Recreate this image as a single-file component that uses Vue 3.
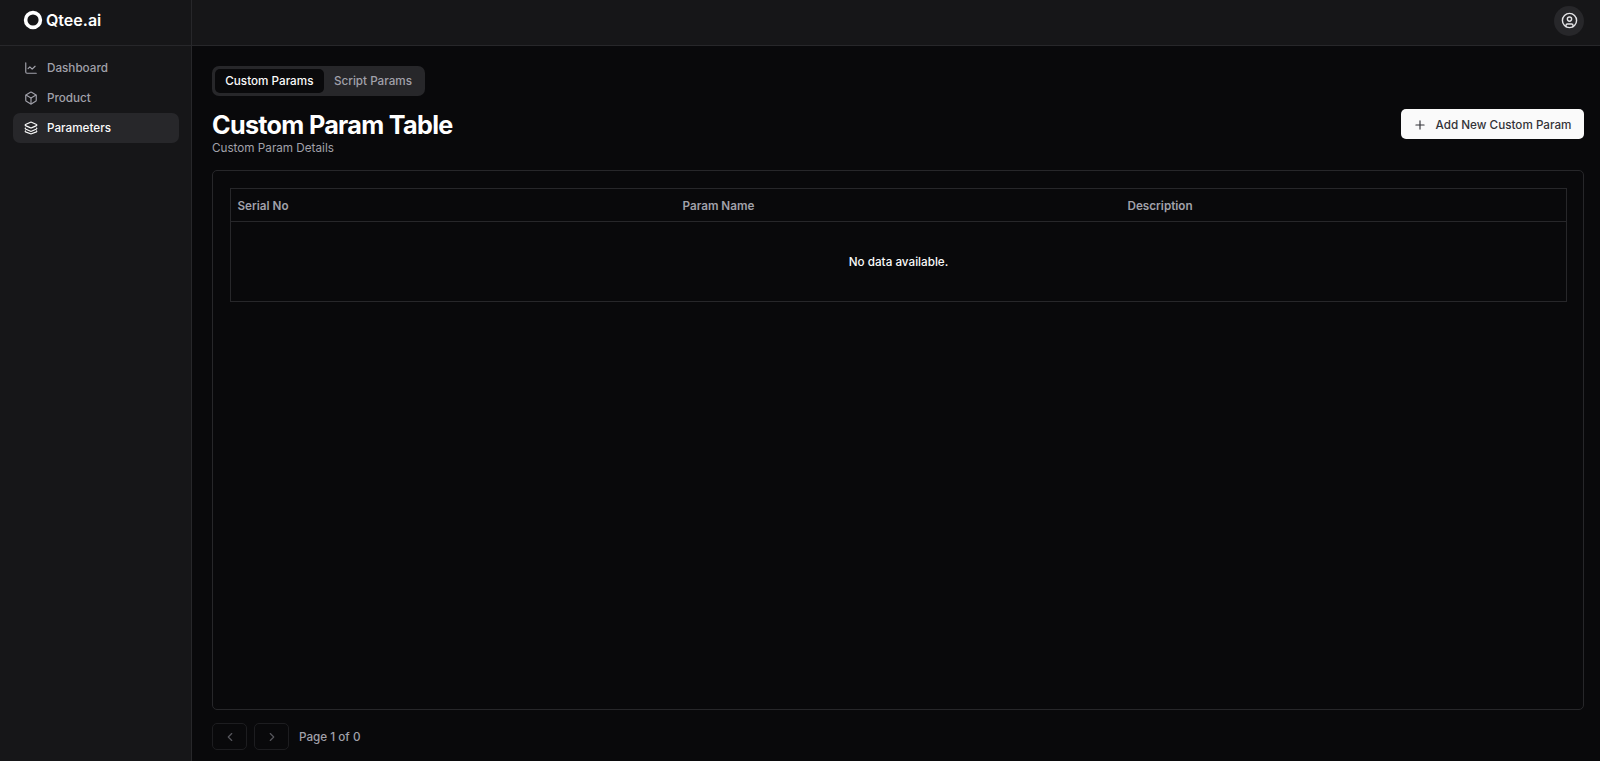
<script setup>
const nav = [
  { label: 'Dashboard', icon: 'chart' },
  { label: 'Product', icon: 'box' },
  { label: 'Parameters', icon: 'layers', active: true },
]
const columns = ['Serial No', 'Param Name', 'Description']
</script>

<template>
  <div class="app">
    <aside class="sidebar">
      <div class="brand">
        <svg class="logo" viewBox="0 0 20 20" width="20" height="20"><circle cx="10" cy="10" r="7.4" fill="none" stroke="#fff" stroke-width="3.6" /></svg>
        <span>Qtee.ai</span>
      </div>
      <nav class="nav">
        <a v-for="item in nav" :key="item.label" class="nav-item" :class="{ active: item.active }">
          <svg viewBox="0 0 24 24" width="14" height="14" fill="none" stroke="currentColor" stroke-width="2" stroke-linecap="round" stroke-linejoin="round">
            <template v-if="item.icon === 'chart'">
              <path d="M3 3v16a2 2 0 0 0 2 2h16" /><path d="m19 9-5 5-4-4-3 3" />
            </template>
            <template v-else-if="item.icon === 'box'">
              <path d="M21 8a2 2 0 0 0-1-1.73l-7-4a2 2 0 0 0-2 0l-7 4A2 2 0 0 0 3 8v8a2 2 0 0 0 1 1.73l7 4a2 2 0 0 0 2 0l7-4A2 2 0 0 0 21 16Z" /><path d="m3.3 7 8.7 5 8.7-5" /><path d="M12 22V12" />
            </template>
            <template v-else>
              <path d="M12.83 2.18a2 2 0 0 0-1.66 0L2.6 6.08a1 1 0 0 0 0 1.83l8.58 3.91a2 2 0 0 0 1.66 0l8.58-3.9a1 1 0 0 0 0-1.83Z" /><path d="M2.5 12c-.6.5-.5 1.3.1 1.6l8.58 3.9a2 2 0 0 0 1.66 0l8.58-3.9c.6-.3.7-1.1.1-1.6" /><path d="M2.5 17c-.6.5-.5 1.3.1 1.6l8.58 3.2a2 2 0 0 0 1.66 0l8.58-3.2c.6-.3.7-1.1.1-1.6" />
            </template>
          </svg>
          <span>{{ item.label }}</span>
        </a>
      </nav>
    </aside>
    <div class="body">
      <header class="topbar">
        <button class="avatar">
          <svg viewBox="0 0 24 24" width="17" height="17" fill="none" stroke="currentColor" stroke-width="2" stroke-linecap="round" stroke-linejoin="round">
            <circle cx="12" cy="12" r="10" /><circle cx="12" cy="10" r="3" /><path d="M7 20.662V19a2 2 0 0 1 2-2h6a2 2 0 0 1 2 2v1.662" />
          </svg>
        </button>
      </header>
      <main class="main">
        <div class="tabs">
          <button class="tab active">Custom Params</button>
          <button class="tab">Script Params</button>
        </div>
        <div class="heading">
          <div>
            <h1>Custom Param Table</h1>
            <p>Custom Param Details</p>
          </div>
          <button class="add">
            <svg viewBox="0 0 24 24" width="14" height="14" fill="none" stroke="currentColor" stroke-width="2" stroke-linecap="round"><path d="M5 12h14" /><path d="M12 5v14" /></svg>
            <span>Add New Custom Param</span>
          </button>
        </div>
        <section class="card">
          <div class="table">
            <div class="thead">
              <div v-for="c in columns" :key="c" class="th">{{ c }}</div>
            </div>
            <div class="empty">No data available.</div>
          </div>
        </section>
        <div class="pager">
          <button class="page-btn">
            <svg viewBox="0 0 24 24" width="14" height="14" fill="none" stroke="currentColor" stroke-width="2" stroke-linecap="round" stroke-linejoin="round"><path d="m15 18-6-6 6-6" /></svg>
          </button>
          <button class="page-btn">
            <svg viewBox="0 0 24 24" width="14" height="14" fill="none" stroke="currentColor" stroke-width="2" stroke-linecap="round" stroke-linejoin="round"><path d="m9 18 6-6-6-6" /></svg>
          </button>
          <span class="page-text">Page 1 of 0</span>
        </div>
      </main>
    </div>
  </div>
</template>

<style>
html, body { margin: 0; background: #09090b; }
</style>

<style scoped>
* { box-sizing: border-box; }
.app { display: flex; height: 761px; overflow: hidden; background: #09090b; color: #fafafa; font-family: Inter, "Liberation Sans", sans-serif; font-size: 11.7px; }
.sidebar { width: 192px; flex: none; background: #161618; border-right: 1px solid #27272a; }
.brand { height: 46px; padding: 0 0 5px 23px; display: flex; align-items: center; gap: 3px; border-bottom: 1px solid #27272a; font-family: Inter, sans-serif; font-weight: 600; font-size: 16px; color: #fff; }
.nav { padding: 7px 12px 6px 13px; display: flex; flex-direction: column; }
.nav-item { height: 30px; padding: 0 11px; display: flex; align-items: center; gap: 9px; border-radius: 7px; color: #a1a1aa; font-weight: 500; }
.nav-item.active { background: #27272a; color: #fafafa; }
.body { flex: 1; min-width: 0; display: flex; flex-direction: column; }
.topbar { height: 46px; flex: none; padding: 0 16px; display: flex; justify-content: flex-end; align-items: center; background: #161618; border-bottom: 1px solid #27272a; }
.avatar { width: 30px; height: 30px; margin-bottom: 4px; padding: 0; display: grid; place-items: center; border: 0; border-radius: 50%; background: #27272a; color: #e4e4e7; }
.main { flex: 1; min-height: 0; padding: 20px 16px 11px 20px; display: flex; flex-direction: column; }
.tabs { align-self: flex-start; height: 30px; padding: 3px; display: flex; border-radius: 7px; background: #27272a; }
.tab { height: 24px; padding: 0 10.25px; border: 0; border-radius: 5px; background: transparent; color: #a1a1aa; font: 500 11.7px Inter, sans-serif; }
.tab.active { background: #09090b; color: #fafafa; }
.heading { margin-top: 13px; display: flex; justify-content: space-between; align-items: flex-start; }
h1 { margin: 2px 0 0; font-size: 25.2px; line-height: 28px; font-weight: 700; color: #fff; letter-spacing: -0.7px; }
p { margin: 1px 0 0; color: #a1a1aa; line-height: 16px; }
.add { width: 183px; height: 30px; padding: 1px 1px 0 0; display: flex; align-items: center; justify-content: center; gap: 9px; border: 0; border-radius: 5px; background: #fafafa; color: #333338; font: 500 11.7px Inter, sans-serif; }
.card { flex: 1; margin-top: 14px; padding: 17px 16px 17px 17px; border: 1px solid #27272a; border-radius: 5px; }
.table { border: 1px solid #27272a; }
.thead { height: 33px; display: grid; grid-template-columns: repeat(3, 1fr); align-items: center; border-bottom: 1px solid #27272a; }
.th { padding: 1px 0 0 6.5px; color: #a1a1aa; font-weight: 600; }
.empty { height: 79px; display: grid; place-items: center; color: #fafafa; font-weight: 500; }
.pager { margin-top: 13px; display: flex; align-items: center; gap: 7px; }
.page-btn { width: 35px; height: 27px; padding: 0; display: grid; place-items: center; border: 1px solid #1d1d20; border-radius: 5px; background: transparent; color: #57575d; }
.page-text { margin-left: 3px; color: #a1a1aa; font-weight: 500; }
</style>
